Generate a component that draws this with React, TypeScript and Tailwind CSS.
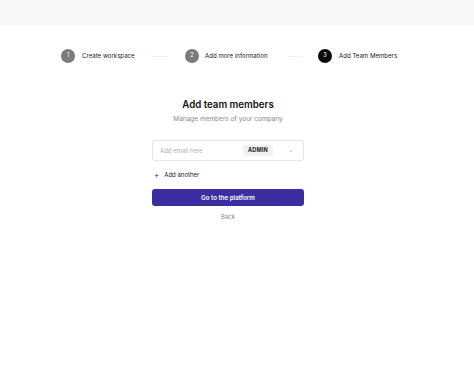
import React from "react";

function Step({ n, label, active, gap }: { n: number; label: string; active?: boolean; gap: string }) {
  return (
    <div className={"flex items-center " + gap}>
      <div
        className={
          "flex h-[14px] w-[14px] items-center justify-center rounded-full text-[5.5px] leading-none text-white " +
          (active ? "bg-[#0a0a0a]" : "bg-[#7b7b7b]")
        }
      >
        {n}
      </div>
      <span className="text-[6.1px] leading-[10px] text-[#222]">{label}</span>
    </div>
  );
}

export default function App() {
  return (
    <div className="h-[380px] w-[474px] bg-white" style={{ fontFamily: "Inter, 'Noto Sans', sans-serif" }}>
      <div className="h-[25px] w-full bg-[#f7f7f7]" />
      <div className="mt-[24px] flex h-[14px] items-center">
        <div className="ml-[61px] w-[91px]">
          <Step n={1} label="Create workspace" gap="gap-[7px]" />
        </div>
        <div className="h-px w-[16px] bg-[#f0f0f0]" />
        <div className="ml-[17px] w-[103px]">
          <Step n={2} label="Add more information" gap="gap-[6px]" />
        </div>
        <div className="h-px w-[15px] bg-[#f0f0f0]" />
        <div className="ml-[15px]">
          <Step n={3} label="Add Team Members" active gap="gap-[7px]" />
        </div>
      </div>
      <div className="ml-[152px] mt-[35px] flex w-[152px] flex-col items-center">
        <h1 className="text-[9.7px] font-semibold leading-[14px] text-[#111]">Add team members</h1>
        <p className="mt-[2px] text-[6.5px] leading-[10px] text-[#8a8a8a]">Manage members of your company</p>
        <div className="mt-[16px] flex h-[21px] w-full items-center rounded-[3px] border border-[#e6e6e6] pl-[7px] pr-[9px]">
          <span className="flex-1 text-[6px] leading-[10px] text-[#b0b0b0]">Add email here</span>
          <span className="rounded-[2px] bg-[#f1f1f1] px-[5px] py-[2px] text-[5.5px] font-bold leading-[7px] tracking-[0.2px] text-[#222]">ADMIN</span>
          <svg className="ml-[15px]" width="6" height="4" viewBox="0 0 6 4" fill="none">
            <path d="M1 1l2 2 2-2" stroke="#bbb" strokeWidth="0.7" />
          </svg>
        </div>
        <div className="mt-[9px] flex h-[10px] w-full items-center gap-[5px] pl-[2px]">
          <span className="text-[8px] leading-[10px] text-[#444]">+</span>
          <span className="text-[6px] leading-[10px] text-[#222]">Add another</span>
        </div>
        <button className="mt-[9px] flex h-[17px] w-full items-center justify-center rounded-[3px] bg-[#3b2ea0] text-[6.2px] font-semibold leading-[10px] text-white">
          Go to the platform
        </button>
        <span className="mt-[6px] text-[6px] leading-[10px] text-[#888]">Back</span>
      </div>
    </div>
  );
}
